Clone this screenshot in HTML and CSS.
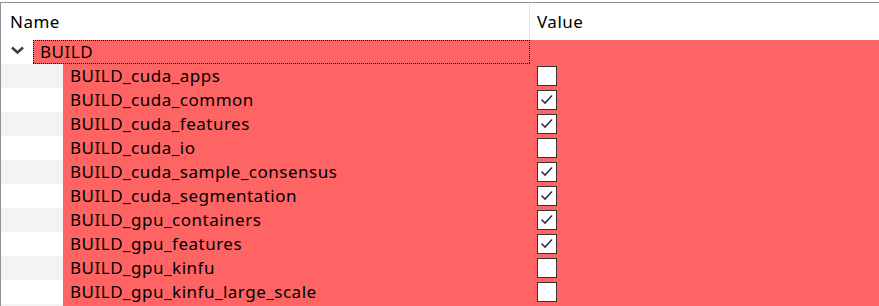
FILE: index.html
```html
<!DOCTYPE html>
<html lang="en">
<head>
    <meta charset="UTF-8">
    <title>CMake Options</title>
    <link rel="stylesheet" href="styles.css">
</head>
<body>
    <div class="tree">
        <div class="header">
            <div class="col-name">Name</div>
            <div class="col-value">Value</div>
        </div>

        <!-- grupo expandido -->
        <div class="row group">
            <div class="indent">
                <svg class="chevron" width="16" height="9" viewBox="0 0 16 9">
                    <path d="M2 1.5 L7.5 6.5 L13 1.5" fill="none" stroke="#404040" stroke-width="2.6"/>
                </svg>
            </div>
            <div class="body">
                <div class="name focus">BUILD</div>
                <div class="value"></div>
            </div>
        </div>

        <div class="row child">
            <div class="indent"></div>
            <div class="body">
                <div class="name">BUILD_cuda_apps</div>
                <div class="value"><span class="check"></span></div>
            </div>
        </div>
        <div class="row child">
            <div class="indent"></div>
            <div class="body">
                <div class="name">BUILD_cuda_common</div>
                <div class="value"><span class="check checked"><svg viewBox="0 0 18 18"><path d="M3.5 8.5 L7 12 L14 4.5"/></svg></span></div>
            </div>
        </div>
        <div class="row child">
            <div class="indent"></div>
            <div class="body">
                <div class="name">BUILD_cuda_features</div>
                <div class="value"><span class="check checked"><svg viewBox="0 0 18 18"><path d="M3.5 8.5 L7 12 L14 4.5"/></svg></span></div>
            </div>
        </div>
        <div class="row child">
            <div class="indent"></div>
            <div class="body">
                <div class="name">BUILD_cuda_io</div>
                <div class="value"><span class="check"></span></div>
            </div>
        </div>
        <div class="row child">
            <div class="indent"></div>
            <div class="body">
                <div class="name">BUILD_cuda_sample_consensus</div>
                <div class="value"><span class="check checked"><svg viewBox="0 0 18 18"><path d="M3.5 8.5 L7 12 L14 4.5"/></svg></span></div>
            </div>
        </div>
        <div class="row child">
            <div class="indent"></div>
            <div class="body">
                <div class="name">BUILD_cuda_segmentation</div>
                <div class="value"><span class="check checked"><svg viewBox="0 0 18 18"><path d="M3.5 8.5 L7 12 L14 4.5"/></svg></span></div>
            </div>
        </div>
        <div class="row child">
            <div class="indent"></div>
            <div class="body">
                <div class="name">BUILD_gpu_containers</div>
                <div class="value"><span class="check checked"><svg viewBox="0 0 18 18"><path d="M3.5 8.5 L7 12 L14 4.5"/></svg></span></div>
            </div>
        </div>
        <div class="row child">
            <div class="indent"></div>
            <div class="body">
                <div class="name">BUILD_gpu_features</div>
                <div class="value"><span class="check checked"><svg viewBox="0 0 18 18"><path d="M3.5 8.5 L7 12 L14 4.5"/></svg></span></div>
            </div>
        </div>
        <div class="row child">
            <div class="indent"></div>
            <div class="body">
                <div class="name">BUILD_gpu_kinfu</div>
                <div class="value"><span class="check"></span></div>
            </div>
        </div>
        <div class="row child">
            <div class="indent"></div>
            <div class="body">
                <div class="name">BUILD_gpu_kinfu_large_scale</div>
                <div class="value"><span class="check"></span></div>
            </div>
        </div>
        <!-- proxima linha, so a borda aparece -->
        <div class="row child">
            <div class="indent"></div>
            <div class="body"></div>
        </div>
    </div>
</body>
</html>
```

FILE: styles.css
```css
html, body {
    margin: 0;
    padding: 0;
    background: #fff;
    overflow: hidden;
}

body {
    padding-top: 2px;
    font-family: "Noto Sans", "Open Sans", sans-serif;
    font-size: 17px;
    letter-spacing: 0.5px;
    color: #000;
}

.tree {
    border-top: 1px solid #8d9299;
    border-left: 1px solid #8d9299;
}

/* cabecalho das colunas */
.header {
    display: flex;
    height: 37px;
    align-items: center;
}

.header .col-name {
    width: 529px;
    box-sizing: border-box;
    padding-left: 9px;
    height: 100%;
    line-height: 37px;
    border-right: 1px solid #e5e5e5;
}

.header .col-value {
    padding-left: 7px;
    line-height: 37px;
}

/* linhas */
.row {
    display: flex;
    height: 24px;
}

.indent {
    flex: none;
}

.group .indent {
    width: 32px;
    position: relative;
}

.chevron {
    position: absolute;
    left: 9px;
    top: 6px;
}

.child .indent {
    width: 62px;
}

.child:nth-child(odd) .indent {
    background: #f3f3f3;
}

.body {
    flex: 1;
    display: flex;
    background: #ff6464;
}

.name {
    box-sizing: border-box;
    padding-left: 7px;
    line-height: 24px;
    white-space: nowrap;
}

.child .name {
    width: 467px;
}

.group .name {
    width: 497px;
}

/* retangulo pontilhado do item com foco */
.focus {
    background:
        repeating-linear-gradient(90deg, #000 0 1px, transparent 1px 2px) top / 100% 1px no-repeat,
        repeating-linear-gradient(90deg, #000 0 1px, transparent 1px 2px) bottom / 100% 1px no-repeat,
        repeating-linear-gradient(180deg, #000 0 1px, transparent 1px 2px) left / 1px 100% no-repeat,
        repeating-linear-gradient(180deg, #000 0 1px, transparent 1px 2px) right / 1px 100% no-repeat;
}

.value {
    flex: 1;
    padding-left: 7px;
    padding-top: 2px;
}

.check {
    display: block;
    width: 20px;
    height: 20px;
    box-sizing: border-box;
    border: 1px solid #333;
    background: #fff;
}

.check svg {
    display: block;
    width: 18px;
    height: 18px;
}

.check svg path {
    fill: none;
    stroke: #333;
    stroke-width: 1.6;
}
```
